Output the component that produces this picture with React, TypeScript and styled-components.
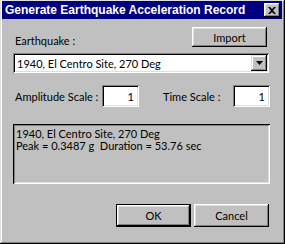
import React from "react";
import styled, { createGlobalStyle } from "styled-components";

const Global = createGlobalStyle`
  html, body { margin: 0; padding: 0; background: #c0c0c0; }
  body { font-family: Lato, "Liberation Sans", Arial, sans-serif; font-size: 11px; color: #000; }
`;

const Window = styled.div`
  width: 285px;
  height: 244px;
  box-sizing: border-box;
  background: #c0c0c0;
  padding: 1px 3px 3px 2px;
  display: flex;
  flex-direction: column;
  box-shadow: inset -1px -1px 0 #000, inset 1px 1px 0 #dfdfdf, inset -2px -2px 0 #808080, inset 2px 2px 0 #fff;
`;

const TitleBar = styled.div`
  height: 18px;
  background: #000080;
  display: flex;
  align-items: center;
  justify-content: space-between;
  padding: 0 2px 0 3px;
`;

const TitleText = styled.span`
  color: #fff;
  font-family: "Liberation Sans", Arial, sans-serif;
  font-weight: bold;
  font-size: 12px;
  white-space: nowrap;
`;

const CloseButton = styled.div`
  flex: none;
  width: 16px;
  height: 14px;
  box-sizing: border-box;
  background: #c0c0c0;
  box-shadow: inset -1px -1px 0 #000, inset 1px 1px 0 #fff, inset -2px -2px 0 #808080, inset 2px 2px 0 #dfdfdf;
  display: flex;
  align-items: center;
  justify-content: center;
`;

const Content = styled.div`
  display: flex;
  flex-direction: column;
  padding: 0 12px 0 11px;
`;

const TopRow = styled.div`
  display: flex;
  justify-content: space-between;
  align-items: flex-end;
  margin-top: 8px;
  padding-right: 3px;
`;

const EqLabel = styled.span`
  padding-left: 2px;
  line-height: 13px;
  white-space: nowrap;
`;

const Button = styled.div<{ $default?: boolean; $h?: number }>`
  width: 75px;
  height: ${(p) => p.$h ?? 20}px;
  box-sizing: border-box;
  background: #c0c0c0;
  display: flex;
  align-items: center;
  justify-content: center;
  box-shadow: ${(p) =>
    p.$default
      ? "inset 0 0 0 1px #000, inset -2px -2px 0 #000, inset 2px 2px 0 #fff, inset -3px -3px 0 #808080, inset 3px 3px 0 #dfdfdf"
      : "inset -1px -1px 0 #000, inset 1px 1px 0 #fff, inset -2px -2px 0 #808080, inset 2px 2px 0 #dfdfdf"};
`;

const Sunken = styled.div<{ $bg?: string }>`
  box-sizing: border-box;
  background: ${(p) => p.$bg ?? "#fff"};
  box-shadow: inset 1px 1px 0 #808080, inset -1px -1px 0 #fff, inset 2px 2px 0 #000, inset -2px -2px 0 #dfdfdf;
`;

const Combo = styled(Sunken)`
  margin-top: 6px;
  margin-right: 1px;
  height: 20px;
  display: flex;
  align-items: center;
  padding: 2px;
`;

const ComboText = styled.span`
  flex: 1;
  padding-left: 2px;
  white-space: nowrap;
`;

const DropButton = styled.div`
  width: 16px;
  height: 16px;
  box-sizing: border-box;
  background: #c0c0c0;
  box-shadow: inset -1px -1px 0 #000, inset 1px 1px 0 #dfdfdf, inset -2px -2px 0 #808080, inset 2px 2px 0 #fff;
  display: flex;
  align-items: center;
  justify-content: center;
`;

const ScaleRow = styled.div`
  display: flex;
  align-items: center;
  margin-top: 12px;
  height: 22px;
`;

const ScaleLabel = styled.span<{ $w: number; $indent: number }>`
  box-sizing: border-box;
  width: ${(p) => p.$w}px;
  padding-left: ${(p) => p.$indent}px;
  white-space: nowrap;
`;

const NumBox = styled(Sunken)`
  width: 37px;
  height: 22px;
  display: flex;
  align-items: center;
  justify-content: flex-end;
  padding-right: 5px;
`;

const InfoBox = styled(Sunken)`
  margin-top: 17px;
  height: 60px;
  padding: 4px 3px;
  line-height: 12px;
  white-space: nowrap;
  box-shadow: inset 1px 1px 0 #000, inset -1px -1px 0 #fff, inset 2px 2px 0 #808080, inset -2px -2px 0 #dfdfdf;
`;

const ButtonRow = styled.div`
  display: flex;
  justify-content: flex-end;
  gap: 3px;
  margin-top: 20px;
  padding-right: 1px;
`;

export default function App() {
  return (
    <>
      <Global />
      <Window>
        <TitleBar>
          <TitleText>Generate Earthquake Acceleration Record</TitleText>
          <CloseButton>
            <svg width="8" height="7" viewBox="0 0 8 7">
              <path d="M0 0h2l2 2 2-2h2L5 3.5 8 7H6L4 5 2 7H0l3-3.5z" fill="#000" />
            </svg>
          </CloseButton>
        </TitleBar>
        <Content>
          <TopRow>
            <EqLabel>Earthquake :</EqLabel>
            <Button>Import</Button>
          </TopRow>
          <Combo>
            <ComboText>1940, El Centro Site, 270 Deg</ComboText>
            <DropButton>
              <svg width="7" height="4" viewBox="0 0 7 4">
                <path d="M0 0h7L3.5 4z" fill="#000" />
              </svg>
            </DropButton>
          </Combo>
          <ScaleRow>
            <ScaleLabel $w={89} $indent={2}>Amplitude Scale :</ScaleLabel>
            <NumBox>1</NumBox>
            <ScaleLabel $w={94} $indent={24}>Time Scale :</ScaleLabel>
            <NumBox>1</NumBox>
          </ScaleRow>
          <InfoBox $bg="#c0c0c0">
            1940, El Centro Site, 270 Deg
            <br />
            Peak = 0.3487 g&nbsp; Duration = 53.76 sec
          </InfoBox>
          <ButtonRow>
            <Button $default $h={23}>OK</Button>
            <Button $h={23}>Cancel</Button>
          </ButtonRow>
        </Content>
      </Window>
    </>
  );
}
